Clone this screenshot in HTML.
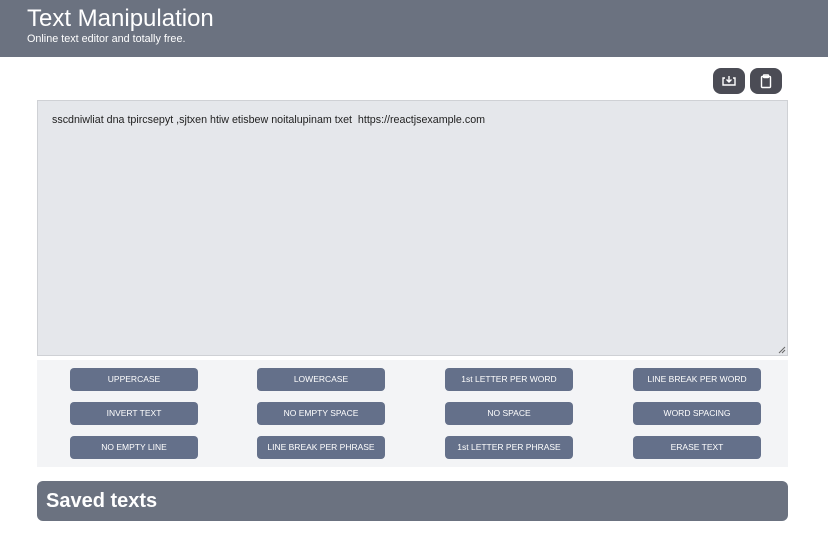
<!DOCTYPE html><html><head><style>
body{margin:0;width:828px;height:534px;background:#fff;font-family:"Liberation Sans",sans-serif;position:relative;overflow:hidden}
.hd{position:absolute;left:0;top:0;width:828px;height:57px;background:#6b7280;color:#fff}
.t{position:absolute;left:27px;top:5px;font-size:24px}
.s{position:absolute;left:27px;top:33px;font-size:10.8px}
.ib{position:absolute;top:68px;width:32px;height:26px;background:#4b4c55;border-radius:8px}
.ta{position:absolute;left:37px;top:100px;width:749px;height:254px;background:#e5e7eb;border:1px solid #cfd1d5}
.ta span{position:absolute;left:14px;top:13px;font-size:10.7px;color:#222}
.pn{position:absolute;left:37px;top:360px;width:751px;height:107px;background:#f3f4f6}
.b{position:absolute;width:128px;height:23px;background:#64708a;border-radius:4px;color:#fff;font-size:8.5px;text-align:center;line-height:23px}
.sv{position:absolute;left:37px;top:481px;width:751px;height:40px;background:#6b7280;border-radius:6px;color:#fff;font-weight:bold;font-size:20px}
.sv span{position:absolute;left:9px;top:9px}
</style></head><body>
<div class="hd"><div class="t">Text Manipulation</div><div class="s">Online text editor and totally free.</div></div>
<div class="ib" style="left:713px"><svg width="32" height="26" viewBox="0 0 32 26" fill="none" stroke="#fff" stroke-width="1.4"><path d="M12 10h-2v7h12v-7h-2"/><path d="M16 8v6M13.5 11.5L16 14l2.5-2.5"/></svg></div>
<div class="ib" style="left:750px"><svg width="32" height="26" viewBox="0 0 32 26" fill="none" stroke="#fff" stroke-width="1.4"><rect x="11.5" y="8.5" width="9" height="11" rx="1"/><rect x="13.5" y="7" width="5" height="2.5" rx=".5"/></svg></div>
<div class="ta"><span>sscdniwliat dna tpircsepyt ,sjtxen htiw etisbew noitalupinam txet &nbsp;https://reactjsexample.com</span><svg style="position:absolute;right:1px;bottom:1px" width="9" height="9" stroke="#666" stroke-width="1"><path d="M8 2L2 8M8 5L5 8"/></svg></div>
<div class="pn"></div>
<div class="b" style="left:70px;top:368px">UPPERCASE</div>
<div class="b" style="left:257px;top:368px">LOWERCASE</div>
<div class="b" style="left:445px;top:368px">1st LETTER PER WORD</div>
<div class="b" style="left:633px;top:368px">LINE BREAK PER WORD</div>
<div class="b" style="left:70px;top:402px">INVERT TEXT</div>
<div class="b" style="left:257px;top:402px">NO EMPTY SPACE</div>
<div class="b" style="left:445px;top:402px">NO SPACE</div>
<div class="b" style="left:633px;top:402px">WORD SPACING</div>
<div class="b" style="left:70px;top:436px">NO EMPTY LINE</div>
<div class="b" style="left:257px;top:436px">LINE BREAK PER PHRASE</div>
<div class="b" style="left:445px;top:436px">1st LETTER PER PHRASE</div>
<div class="b" style="left:633px;top:436px">ERASE TEXT</div>
<div class="sv"><span>Saved texts</span></div>
</body></html>
